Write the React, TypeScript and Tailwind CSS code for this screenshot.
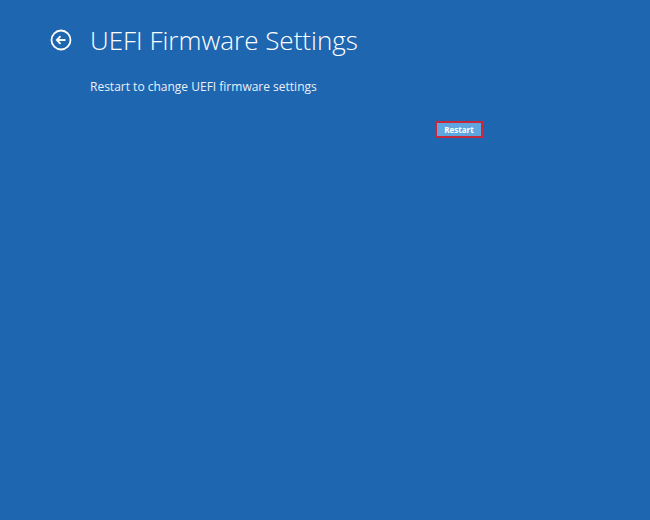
export default function App() {
  return (
    <div className="w-[650px] h-[520px] bg-[#1f66b1] text-white font-['Open_Sans',sans-serif] overflow-hidden">
      <div className="flex items-center pt-[23px] pl-[50px]">
        <svg width="22" height="22" viewBox="0 0 22 22" className="mr-[18px]">
          <circle cx="11" cy="11" r="9.5" fill="none" stroke="white" strokeWidth="1.8" />
          <path d="M15.5 11H7M10.5 7.2L6.8 11l3.7 3.8" fill="none" stroke="white" strokeWidth="1.8" />
        </svg>
        <h1 className="text-[26px] font-light leading-[34px]">UEFI Firmware Settings</h1>
      </div>
      <p className="pl-[90px] mt-[21px] text-[12px] leading-[18px] text-[#e8f0f8]">
        Restart to change UEFI firmware settings
      </p>
      <div className="flex pl-[435px] mt-[25px]">
        <button className="w-[48px] h-[17px] border-2 border-[#c8283c] bg-[#5ea6df] text-[8px] font-bold leading-[13px] text-white">
          Restart
        </button>
      </div>
    </div>
  );
}
